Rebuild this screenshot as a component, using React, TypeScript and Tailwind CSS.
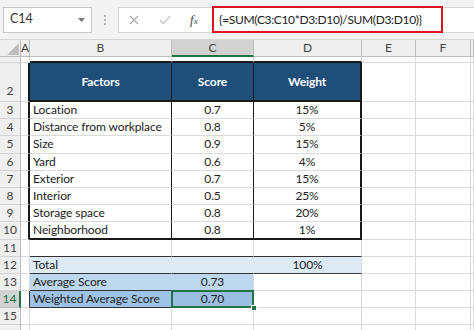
import React from 'react'

// widths: row hdr 21, A 9, B 142, C 82, D 108, E 54, F 55, G rest
const font = { fontFamily: 'Lato, "Open Sans", "Liberation Sans", sans-serif' }

const Cell: React.FC<{ className?: string; children?: React.ReactNode }> = ({ className, children }) => (
  <div className={`shrink-0 h-full border-r border-b box-border flex items-center overflow-hidden whitespace-nowrap ${className ?? ''}`}>
    {children}
  </div>
)

const RowHead: React.FC<{ n?: number; sel?: boolean; bottom?: boolean }> = ({ n, sel, bottom }) => (
  <Cell
    className={`w-[21px] justify-center text-[12px] tracking-normal ${bottom ? 'items-end pb-[1px]' : ''} ${
      sel
        ? 'bg-[#d2d2d2] text-[#217346] border-r-2 border-r-[#217346] border-b-[#bdbdbd]'
        : 'bg-[#efefef] text-[#444] border-r-[#bdbdbd] border-b-[#d4d4d4]'
    }`}
  >
    {n}
  </Cell>
)

const Tail: React.FC = () => (
  <>
    <Cell className="w-[54px] border-[#dadada]" />
    <Cell className="w-[55px] border-[#dadada]" />
    <Cell className="flex-1 border-[#dadada]" />
  </>
)

const data = [
  ['Location', '0.7', '15%'],
  ['Distance from workplace', '0.8', '5%'],
  ['Size', '0.9', '15%'],
  ['Yard', '0.6', '4%'],
  ['Exterior', '0.7', '15%'],
  ['Interior', '0.5', '25%'],
  ['Storage space', '0.8', '20%'],
  ['Neighborhood', '0.8', '1%'],
]

const App: React.FC = () => {
  return (
    <div className="w-[474px] h-[330px] overflow-hidden bg-white text-[#222]" style={font}>
      {/* formula bar */}
      <div className="h-[40px] bg-[#f3f3f3] border-b border-[#d4d4d4] flex items-center">
        <div className="ml-[3px] w-[89px] h-[26px] bg-white border border-[#c6c6c6] flex items-center pl-[6px] pr-[6px] text-[12.5px] text-[#333]">
          <span className="flex-1">C14</span>
          <svg width="7" height="4" viewBox="0 0 7 4">
            <path d="M0 0 L7 0 L3.5 4 Z" fill="#777" />
          </svg>
        </div>
        <div className="w-[26px] flex flex-col items-center gap-[2px]">
          <span className="w-[2px] h-[2px] bg-[#b5b5b5]" />
          <span className="w-[2px] h-[2px] bg-[#b5b5b5]" />
          <span className="w-[2px] h-[2px] bg-[#b5b5b5]" />
        </div>
        <div className="w-[94px] h-[26px] bg-white border border-[#d6d6d6] border-r-0 flex items-center">
          <svg className="ml-[10px]" width="10" height="10" viewBox="0 0 10 10">
            <path d="M1 1 L9 9 M9 1 L1 9" stroke="#a8a8a8" strokeWidth="1.2" />
          </svg>
          <svg className="ml-[20px]" width="12" height="10" viewBox="0 0 12 10">
            <path d="M1 5 L4.5 8.5 L11 1" stroke="#c4c4c4" strokeWidth="1.3" fill="none" />
          </svg>
          <span className="ml-[19px] italic text-[13px] text-[#444]" style={{ fontFamily: '"Liberation Serif", serif' }}>
            f<span className="text-[9px]">x</span>
          </span>
        </div>
        <div className="flex-1 h-[26px] bg-white border-y border-[#d6d6d6] flex items-center">
          <div className="w-[231px] h-[27px] border-2 border-[#e0141e] flex items-center pl-[5px] text-[12px] tracking-[-0.35px] text-[#222]">
            {'{=SUM(C3:C10*D3:D10)/SUM(D3:D10)}'}
          </div>
        </div>
      </div>

      {/* column headers */}
      <div className="flex h-[17px] text-[12px] text-[#444]">
        <Cell className="w-[21px] bg-[#efefef] border-r-[#bdbdbd] border-b-[#bdbdbd] items-end justify-end pr-[1px] pb-[1px]">
          <svg width="12" height="12" viewBox="0 0 12 12">
            <path d="M12 0 L12 12 L0 12 Z" fill="#bfbfbf" />
          </svg>
        </Cell>
        <Cell className="w-[9px] bg-[#efefef] border-[#bdbdbd] justify-center">A</Cell>
        <Cell className="w-[142px] bg-[#efefef] border-[#bdbdbd] justify-center">B</Cell>
        <Cell className="w-[82px] bg-[#d2d2d2] border-r-[#bdbdbd] border-b-2 border-b-[#217346] justify-center">C</Cell>
        <Cell className="w-[108px] bg-[#efefef] border-[#bdbdbd] justify-center">D</Cell>
        <Cell className="w-[54px] bg-[#efefef] border-[#bdbdbd] justify-center">E</Cell>
        <Cell className="w-[55px] bg-[#efefef] border-[#bdbdbd] justify-center">F</Cell>
        <Cell className="flex-1 bg-[#efefef] border-[#bdbdbd]" />
      </div>

      <div className="text-[12px] tracking-[-0.1px]">
        {/* row 1 */}
        <div className="flex h-[6px]">
          <Cell className="w-[21px] bg-[#efefef] border-r-[#bdbdbd] border-b-[#d4d4d4]" />
          <Cell className="w-[9px] border-[#dadada]" />
          <Cell className="w-[142px] border-r-[#dadada] border-b-2 border-b-[#1a1a1a]" />
          <Cell className="w-[82px] border-r-[#dadada] border-b-2 border-b-[#1a1a1a]" />
          <Cell className="w-[108px] border-r-[#dadada] border-b-2 border-b-[#1a1a1a]" />
          <Tail />
        </div>

        {/* row 2 header */}
        <div className="flex h-[39px]">
          <RowHead n={2} bottom />
          <Cell className="w-[9px] border-b-[#dadada] border-r-2 border-r-[#1a1a1a]" />
          <Cell className="w-[142px] bg-[#1f4e79] border-r-[#1a1a1a] border-b-2 border-b-[#1a1a1a] justify-center font-bold text-white">
            Factors
          </Cell>
          <Cell className="w-[82px] bg-[#1f4e79] border-r-[#1a1a1a] border-b-2 border-b-[#1a1a1a] justify-center font-bold text-white">
            Score
          </Cell>
          <Cell className="w-[108px] bg-[#1f4e79] border-r-2 border-r-[#1a1a1a] border-b-2 border-b-[#1a1a1a] justify-center font-bold text-white">
            Weight
          </Cell>
          <Tail />
        </div>

        {/* rows 3-10 */}
        {data.map((r, i) => {
          const last = i === data.length - 1
          return (
            <div key={i} className="flex h-[17.2px]">
              <RowHead n={i + 3} />
              <Cell className="w-[9px] border-b-[#dadada] border-r-2 border-r-[#1a1a1a]" />
              <Cell className={`w-[142px] border-r-[#1a1a1a] pl-[3px] ${last ? 'border-b-2 border-b-[#1a1a1a]' : 'border-b-[#dadada]'}`}>
                {r[0]}
              </Cell>
              <Cell className={`w-[82px] border-r-[#1a1a1a] justify-center ${last ? 'border-b-2 border-b-[#1a1a1a]' : 'border-b-[#dadada]'}`}>
                {r[1]}
              </Cell>
              <Cell className={`w-[108px] border-r-2 border-r-[#1a1a1a] justify-center ${last ? 'border-b-2 border-b-[#1a1a1a]' : 'border-b-[#dadada]'}`}>
                {r[2]}
              </Cell>
              <Tail />
            </div>
          )
        })}

        {/* row 11 */}
        <div className="flex h-[17.2px]">
          <RowHead n={11} />
          <Cell className="w-[9px] border-[#dadada]" />
          <Cell className="w-[142px] border-r-[#dadada] border-b-[#333]" />
          <Cell className="w-[82px] border-r-[#dadada] border-b-[#333]" />
          <Cell className="w-[108px] border-r-[#dadada] border-b-[#333]" />
          <Tail />
        </div>

        {/* row 12 */}
        <div className="flex h-[17.2px]">
          <RowHead n={12} />
          <Cell className="w-[9px] border-[#dadada]" />
          <Cell className="w-[142px] bg-[#ddebf7] border-r-[#ddebf7] border-b-[#333] pl-[3px]">Total</Cell>
          <Cell className="w-[82px] bg-[#ddebf7] border-r-[#ddebf7] border-b-[#333]" />
          <Cell className="w-[108px] bg-[#ddebf7] border-r-[#dadada] border-b-[#333] justify-center">100%</Cell>
          <Tail />
        </div>

        {/* row 13 */}
        <div className="flex h-[17.2px]">
          <RowHead n={13} />
          <Cell className="w-[9px] border-[#dadada]" />
          <Cell className="w-[142px] bg-[#bdd7ee] border-r-[#bdd7ee] border-b-[#333] pl-[3px]">Average Score</Cell>
          <Cell className="w-[82px] bg-[#bdd7ee] border-r-[#dadada] border-b-[#bdd7ee] justify-center">0.73</Cell>
          <Cell className="w-[108px] border-[#dadada]" />
          <Tail />
        </div>

        {/* row 14 */}
        <div className="flex h-[17.2px]">
          <RowHead n={14} sel />
          <Cell className="w-[9px] border-b-[#dadada] border-r-[#333]" />
          <Cell className="w-[142px] bg-[#9dc3e6] border-r-[#333] border-b-[#333] pl-[3px]">Weighted Average Score</Cell>
          <div className="relative shrink-0 w-[82px] h-full bg-[#9bbfe2] border-b border-r border-[#dadada] flex items-center justify-center">
            0.70
            <div className="absolute -top-[1px] -left-[1px] -right-[1px] -bottom-[1px] border-2 border-[#217346]" />
            <div className="absolute -right-[4px] -bottom-[4px] w-[6px] h-[6px] bg-[#217346] border border-white" />
          </div>
          <Cell className="w-[108px] border-[#dadada]" />
          <Tail />
        </div>

        {/* row 15, 16 (16 only peeks in) */}
        {[15, 16].map(n => (
          <div key={n} className="flex h-[17.2px]">
            <RowHead n={n === 15 ? 15 : undefined} />
            <Cell className="w-[9px] border-[#dadada]" />
            <Cell className="w-[142px] border-[#dadada]" />
            <Cell className="w-[82px] border-[#dadada]" />
            <Cell className="w-[108px] border-[#dadada]" />
            <Tail />
          </div>
        ))}
      </div>
    </div>
  )
}

export default App
